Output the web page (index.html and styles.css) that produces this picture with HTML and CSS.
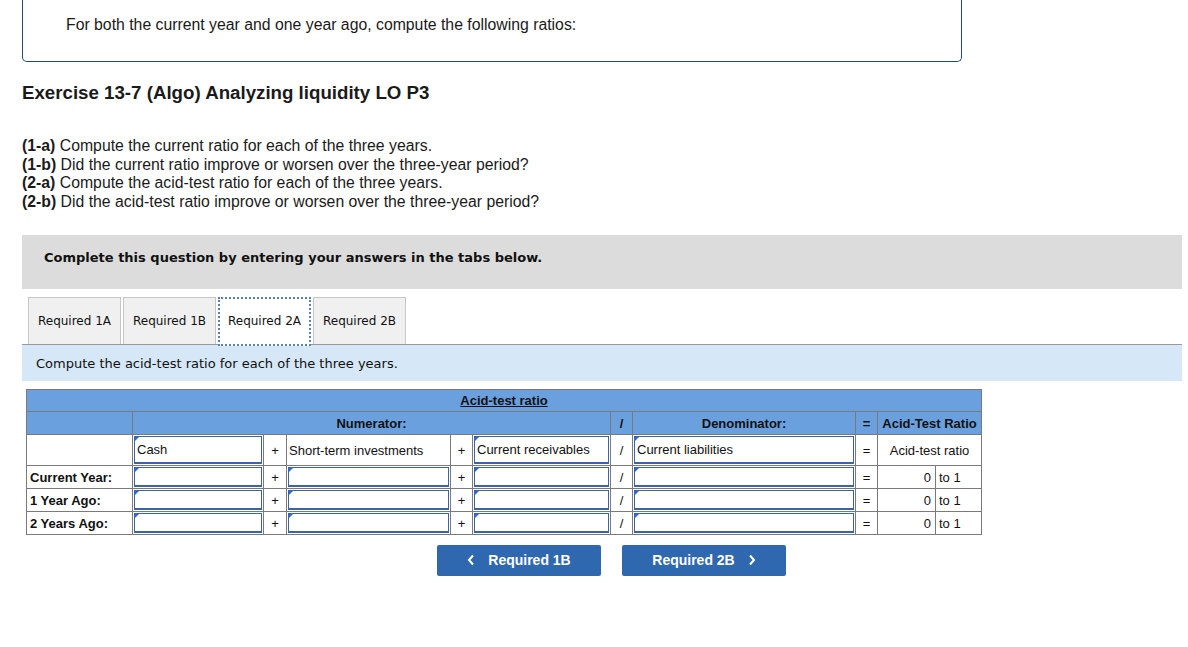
FILE: index.html
```html
<!DOCTYPE html>
<html>
<head>
<meta charset="utf-8">
<link rel="stylesheet" href="styles.css">
</head>
<body>
<div class="page">
  <div class="intro">For both the current year and one year ago, compute the following ratios:</div>
  <h1 class="title">Exercise 13-7 (Algo) Analyzing liquidity LO P3</h1>
  <div class="questions">
    <div><b>(1-a)</b> Compute the current ratio for each of the three years.</div>
    <div><b>(1-b)</b> Did the current ratio improve or worsen over the three-year period?</div>
    <div><b>(2-a)</b> Compute the acid-test ratio for each of the three years.</div>
    <div><b>(2-b)</b> Did the acid-test ratio improve or worsen over the three-year period?</div>
  </div>
  <div class="instruct">Complete this question by entering your answers in the tabs below.</div>
  <div class="tabs">
    <div class="tab">Required 1A</div>
    <div class="tab">Required 1B</div>
    <div class="tab active">Required 2A</div>
    <div class="tab">Required 2B</div>
  </div>
  <div class="infobar">Compute the acid-test ratio for each of the three years.</div>
  <table class="grid">
    <colgroup>
      <col style="width:106px"><col style="width:131px"><col style="width:23px"><col style="width:164px"><col style="width:22px"><col style="width:138px"><col style="width:22px"><col style="width:223px"><col style="width:22px"><col style="width:58px"><col style="width:46px">
    </colgroup>
    <tr class="h1row"><th colspan="11"><u>Acid-test ratio</u></th></tr>
    <tr class="h2row">
      <th></th>
      <th colspan="5">Numerator:</th>
      <th>/</th>
      <th>Denominator:</th>
      <th>=</th>
      <th colspan="2">Acid-Test Ratio</th>
    </tr>
    <tr class="namerow">
      <td></td>
      <td class="in"><div class="box">Cash</div></td>
      <td class="op">+</td>
      <td class="plain">Short-term investments</td>
      <td class="op">+</td>
      <td class="in"><div class="box">Current receivables</div></td>
      <td class="op">/</td>
      <td class="in"><div class="box">Current liabilities</div></td>
      <td class="op">=</td>
      <td colspan="2" class="ctr">Acid-test ratio</td>
    </tr>
    <tr class="datarow">
      <th class="lbl">Current Year:</th>
      <td class="in"><div class="box"></div></td>
      <td class="op">+</td>
      <td class="in"><div class="box"></div></td>
      <td class="op">+</td>
      <td class="in"><div class="box"></div></td>
      <td class="op">/</td>
      <td class="in"><div class="box"></div></td>
      <td class="op">=</td>
      <td class="num">0</td>
      <td class="to">to 1</td>
    </tr>
    <tr class="datarow">
      <th class="lbl">1 Year Ago:</th>
      <td class="in"><div class="box"></div></td>
      <td class="op">+</td>
      <td class="in"><div class="box"></div></td>
      <td class="op">+</td>
      <td class="in"><div class="box"></div></td>
      <td class="op">/</td>
      <td class="in"><div class="box"></div></td>
      <td class="op">=</td>
      <td class="num">0</td>
      <td class="to">to 1</td>
    </tr>
    <tr class="datarow">
      <th class="lbl">2 Years Ago:</th>
      <td class="in"><div class="box"></div></td>
      <td class="op">+</td>
      <td class="in"><div class="box"></div></td>
      <td class="op">+</td>
      <td class="in"><div class="box"></div></td>
      <td class="op">/</td>
      <td class="in"><div class="box"></div></td>
      <td class="op">=</td>
      <td class="num">0</td>
      <td class="to">to 1</td>
    </tr>
  </table>
  <div class="navs">
    <div class="btn"><svg class="chev" width="8" height="12" viewBox="0 0 8 12"><path d="M6 1.5 L2 6 L6 10.5" fill="none" stroke="#fff" stroke-width="2"/></svg><span>Required 1B</span></div>
    <div class="btn"><span>Required 2B</span><svg class="chev" width="8" height="12" viewBox="0 0 8 12"><path d="M2 1.5 L6 6 L2 10.5" fill="none" stroke="#fff" stroke-width="2"/></svg></div>
  </div>
</div>
</body>
</html>
```
FILE: styles.css
```css
html, body {
  margin: 0;
  background: #fff;
}
body {
  font-family: "Liberation Sans", Arial, sans-serif;
  color: #1a1a1a;
}
.page {
  padding: 0 6px 0 22px;
}
.intro {
  box-sizing: border-box;
  width: 940px;
  height: 62px;
  border: 1px solid #1f4a7c;
  border-top: none;
  border-radius: 0 0 5px 5px;
  padding: 15px 0 0 43px;
  font-size: 15.8px;
  line-height: 19px;
}
.title {
  margin: 19px 0 0;
  font-size: 18.7px;
  line-height: 23px;
  font-weight: bold;
}
.questions {
  margin-top: 33px;
  font-size: 15.8px;
  line-height: 18.7px;
}
.instruct {
  margin-top: 23px;
  height: 54px;
  box-sizing: border-box;
  background: #dcdcdc;
  padding: 14px 0 0 22px;
  font-family: "DejaVu Sans", Verdana, sans-serif;
  font-weight: bold;
  font-size: 13px;
  line-height: 17px;
  color: #111;
}
.tabs {
  display: flex;
  gap: 2px;
  margin-top: 8px;
  padding-left: 6px;
  height: 47px;
}
.tab {
  box-sizing: border-box;
  width: 93px;
  height: 47px;
  padding-top: 1px;
  background: #f0f0f0;
  border: 1px solid #c6c6c6;
  border-bottom: none;
  display: flex;
  align-items: center;
  justify-content: center;
  font-family: "DejaVu Sans", Verdana, sans-serif;
  font-size: 12px;
  color: #111;
}
.tab.active {
  background: #fff;
  border: 2px dotted #5a7fb8;
  height: 49px;
  padding-top: 0;
  position: relative;
  z-index: 1;
}
.infobar {
  box-sizing: border-box;
  height: 37px;
  border-top: 1px solid #9a9a9a;
  background: #d6e8f7;
  padding: 11px 0 0 14px;
  font-family: "DejaVu Sans", Verdana, sans-serif;
  font-size: 13px;
  line-height: 16px;
  color: #111;
}
.grid {
  margin: 8px 0 0 4px;
  border-collapse: collapse;
  table-layout: fixed;
  width: 955px;
  font-size: 13px;
  color: #111;
}
.grid th, .grid td {
  border: 1px solid #7a7a7a;
  padding: 1px 0 0;
}
.h1row th {
  height: 20px;
  background: #6ba0de;
  font-weight: bold;
}
.h2row th {
  height: 21px;
  background: #6ba0de;
  font-weight: bold;
}
.namerow td {
  height: 29px;
}
.datarow td, .datarow th {
  height: 21px;
}
.lbl {
  text-align: left;
  padding-left: 3px !important;
  font-weight: bold;
  white-space: nowrap;
}
.op {
  text-align: center;
}
.plain {
  padding-left: 2px !important;
  white-space: nowrap;
}
.ctr {
  text-align: center;
}
.num {
  text-align: right;
  padding-right: 4px !important;
}
.to {
  padding-left: 3px !important;
}
.in {
  position: relative;
}
.box {
  position: absolute;
  left: 1px;
  right: 1px;
  top: 1px;
  bottom: 1px;
  border: 1px solid #3a63a8;
  border-bottom-width: 2px;
  padding-left: 2px;
  padding-top: 1px;
  display: flex;
  align-items: center;
  white-space: nowrap;
  overflow: hidden;
}
.box::before {
  content: "";
  position: absolute;
  left: -1px;
  top: -1px;
  border-left: 6px solid #2f6bd0;
  border-bottom: 6px solid transparent;
  width: 0;
  height: 0;
}
.navs {
  display: flex;
  gap: 21px;
  margin: 10px 0 0 415px;
}
.btn {
  box-sizing: border-box;
  width: 164px;
  height: 31px;
  background: #3068b0;
  border-radius: 2px;
  color: #fff;
  font-weight: bold;
  font-size: 14px;
  display: flex;
  align-items: center;
  justify-content: center;
  gap: 13px;
}
```
